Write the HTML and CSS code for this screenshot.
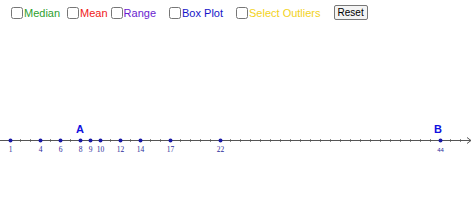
FILE: index.html
```html
<!DOCTYPE html>
<html>
  <head>
    <title>box plot</title>
    <link rel="stylesheet" href="styles.css">
  </head>
  <body>
    <div class="toolbar">
      <label class="option median"><input type="checkbox">Median</label>
      <label class="option mean"><input type="checkbox">Mean</label>
      <label class="option range"><input type="checkbox">Range</label>
      <label class="option boxplot"><input type="checkbox">Box Plot</label>
      <label class="option outliers"><input type="checkbox">Select Outliers</label>
      <button class="reset-button">Reset</button>
    </div>

    <svg class="graph" width="474" height="181" viewBox="0 30 474 181">
      <g id="ticks" stroke="#888" stroke-width="1"></g>
      <line x1="0" y1="140.5" x2="471" y2="140.5" stroke="#555" stroke-width="1"/>
      <path d="M467 137.5 L471 140.5 L467 143.5" fill="none" stroke="#555" stroke-width="1"/>
      <g id="points"></g>
      <text x="80" y="133" class="point-name">A</text>
      <text x="438" y="133" class="point-name">B</text>
    </svg>

    <script>
      const data = [1, 4, 6, 8, 9, 10, 12, 14, 17, 22, 44];
      const ns = 'http://www.w3.org/2000/svg';

      const ticks = document.getElementById('ticks');
      for (let x = 10; x < 468; x += 10) {
        const t = document.createElementNS(ns, 'line');
        t.setAttribute('x1', x + 0.5);
        t.setAttribute('x2', x + 0.5);
        t.setAttribute('y1', 139);
        t.setAttribute('y2', 142);
        ticks.appendChild(t);
      }

      const points = document.getElementById('points');
      data.forEach(function (v) {
        const c = document.createElementNS(ns, 'circle');
        c.setAttribute('cx', v * 10 + 0.5);
        c.setAttribute('cy', 140.5);
        c.setAttribute('r', 2);
        c.setAttribute('fill', '#1a1aa6');
        points.appendChild(c);

        const t = document.createElementNS(ns, 'text');
        t.setAttribute('x', v * 10 + 0.5);
        t.setAttribute('y', 152);
        t.setAttribute('class', v === 44 ? 'value-label small' : 'value-label');
        t.textContent = v;
        points.appendChild(t);
      });
    </script>
  </body>
</html>
```

FILE: styles.css
```css
body {
  margin: 0;
  background-color: white;
  font-family: "Liberation Sans", Arial, sans-serif;
  overflow: hidden;
}

.toolbar {
  display: flex;
  align-items: center;
  height: 30px;
  padding-left: 11px;
  box-sizing: border-box;
  padding-bottom: 4px;
}

.option {
  display: flex;
  align-items: center;
  font-size: 11px;
}

.option input {
  margin: 0 1px 0 0;
  width: 12px;
  height: 12px;
}

.median {
  color: #2ea02e;
  margin-right: 7px;
}

.mean {
  color: #f01818;
  margin-right: 3px;
}

.range {
  color: #6a1ccf;
  margin-right: 13px;
}

.boxplot {
  color: #1515c8;
  margin-right: 13px;
}

.outliers {
  color: #f2d21c;
  margin-right: 13px;
}

.reset-button {
  font-family: "Liberation Sans", Arial, sans-serif;
  font-size: 10px;
  padding: 1px 3px;
  background-color: #f4f4f4;
  border: 1px solid #777;
  border-radius: 2px;
  color: black;
  margin-top: -2px;
}

.graph {
  display: block;
}

.point-name {
  font-family: "Liberation Sans", Arial, sans-serif;
  font-weight: bold;
  font-size: 11px;
  fill: #1010e0;
  text-anchor: middle;
}

.value-label {
  font-family: "Liberation Serif", serif;
  font-size: 7.5px;
  fill: #2a2a9a;
  text-anchor: middle;
}

.small {
  font-family: "Liberation Sans", Arial, sans-serif;
  font-size: 6px;
}
```
